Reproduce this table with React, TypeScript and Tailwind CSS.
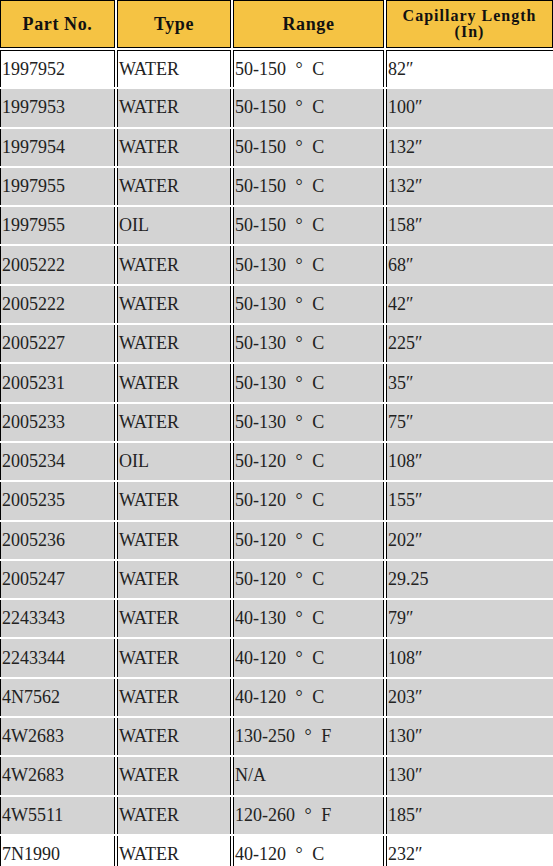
import React from "react";

type Row = { part: string; type: string; range: string; length: string };

const rows: Row[] = [
  { part: "1997952", type: "WATER", range: "50-150 ° C", length: "82″" },
  { part: "1997953", type: "WATER", range: "50-150 ° C", length: "100″" },
  { part: "1997954", type: "WATER", range: "50-150 ° C", length: "132″" },
  { part: "1997955", type: "WATER", range: "50-150 ° C", length: "132″" },
  { part: "1997955", type: "OIL", range: "50-150 ° C", length: "158″" },
  { part: "2005222", type: "WATER", range: "50-130 ° C", length: "68″" },
  { part: "2005222", type: "WATER", range: "50-130 ° C", length: "42″" },
  { part: "2005227", type: "WATER", range: "50-130 ° C", length: "225″" },
  { part: "2005231", type: "WATER", range: "50-130 ° C", length: "35″" },
  { part: "2005233", type: "WATER", range: "50-130 ° C", length: "75″" },
  { part: "2005234", type: "OIL", range: "50-120 ° C", length: "108″" },
  { part: "2005235", type: "WATER", range: "50-120 ° C", length: "155″" },
  { part: "2005236", type: "WATER", range: "50-120 ° C", length: "202″" },
  { part: "2005247", type: "WATER", range: "50-120 ° C", length: "29.25" },
  { part: "2243343", type: "WATER", range: "40-130 ° C", length: "79″" },
  { part: "2243344", type: "WATER", range: "40-120 ° C", length: "108″" },
  { part: "4N7562", type: "WATER", range: "40-120 ° C", length: "203″" },
  { part: "4W2683", type: "WATER", range: "130-250 ° F", length: "130″" },
  { part: "4W2683", type: "WATER", range: "N/A", length: "130″" },
  { part: "4W5511", type: "WATER", range: "120-260 ° F", length: "185″" },
  { part: "7N1990", type: "WATER", range: "40-120 ° C", length: "232″" },
];

const font = "font-['Liberation_Serif','Times_New_Roman',serif]";

const HeadCell = ({ children, small = false }: { children: React.ReactNode; small?: boolean }) => (
  <div
    className={`h-[48px] bg-[#f5c343] border border-black flex items-center justify-center text-center font-bold text-[#111] ${
      small ? "text-[16px] tracking-[1px] leading-[16px]" : "text-[18px] tracking-[0.6px]"
    }`}
  >
    {children}
  </div>
);

export default function App() {
  return (
    <div className={`w-[553px] h-[866px] overflow-hidden bg-white ${font}`}>
      <div className="grid grid-cols-[115px_114px_151px_167px] gap-x-[2px] gap-y-[2px]">
        <HeadCell>Part No.</HeadCell>
        <HeadCell>Type</HeadCell>
        <HeadCell>Range</HeadCell>
        <HeadCell small>
          Capillary Length
          <br />
          (In)
        </HeadCell>

        {rows.map((r, i) => {
          const bg = i === 0 || i === rows.length - 1 ? "bg-white" : "bg-[#d3d3d3]";
          const top = i === 0 ? "border-t" : "";
          const cell = `h-[37.3px] ${bg} ${top} border-black border-l flex items-center pl-[1px] text-[18px] text-[#222] whitespace-nowrap`;
          return (
            <React.Fragment key={i}>
              <div className={`${cell} border-r`}>{r.part}</div>
              <div className={`${cell} border-r`}>{r.type}</div>
              <div className={`${cell} border-r [word-spacing:5px]`}>{r.range}</div>
              <div className={`${cell} w-[170px]`}>{r.length}</div>
            </React.Fragment>
          );
        })}
      </div>
    </div>
  );
}
